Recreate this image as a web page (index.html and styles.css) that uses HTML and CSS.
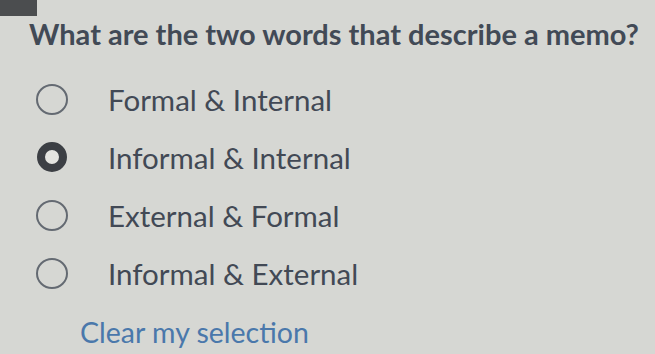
FILE: index.html
```html
<!DOCTYPE html>
<html lang="en">
<head>
    <meta charset="UTF-8">
    <meta name="viewport" content="width=device-width, initial-scale=1.0">
    <title>Quiz</title>
    <link rel="stylesheet" href="styles.css">
</head>
<body>
    <div class="tab"></div>
    <div class="question">
        <h1>What are the two words that describe a memo?</h1>
        <ul class="options">
            <li class="option"><span class="radio"></span><span class="label">Formal &amp; Internal</span></li>
            <li class="option"><span class="radio checked"></span><span class="label">Informal &amp; Internal</span></li>
            <li class="option"><span class="radio"></span><span class="label">External &amp; Formal</span></li>
            <li class="option"><span class="radio"></span><span class="label">Informal &amp; External</span></li>
        </ul>
        <a class="clear" href="#">Clear my selection</a>
    </div>
</body>
</html>
```

FILE: styles.css
```css
body {
    font-family: Lato, "Open Sans", sans-serif;
    margin: 0;
    background-color: #d6d7d3;
    color: #3e4550;
    height: 354px;
    overflow: hidden;
    position: relative;
}

.tab {
    position: absolute;
    top: 0;
    left: 0;
    width: 37px;
    height: 16px;
    background-color: #4b4d4f;
}

.question {
    padding: 16px 0 0 29px;
}

h1 {
    margin: 0;
    font-size: 29px;
    font-weight: 700;
    line-height: 36px;
    color: #424a56;
}

.options {
    list-style: none;
    margin: 18px 0 0 0;
    padding: 0;
}

.option {
    display: flex;
    align-items: center;
    height: 58px;
}

.radio {
    box-sizing: border-box;
    width: 32px;
    height: 31px;
    margin-left: 7px;
    border: 2px solid #646a72;
    border-radius: 50%;
}

.radio.checked {
    border: 8px solid #3c3f44;
    background-color: #e4e4e0;
    width: 30px;
    height: 30px;
    margin-left: 8px;
}

.label {
    margin-left: 40px;
    font-size: 29.5px;
    color: #424955;
}

.radio.checked + .label {
    margin-left: 41px;
}

.clear {
    display: inline-block;
    margin: 13px 0 0 51px;
    font-size: 28.5px;
    color: #4a78ab;
    text-decoration: none;
}
```
